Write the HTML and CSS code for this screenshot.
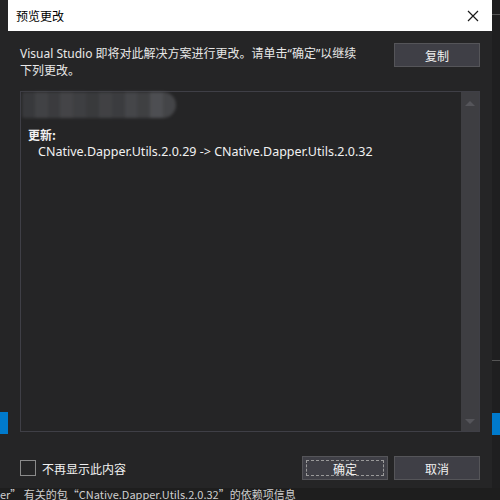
FILE: index.html
```html
<!DOCTYPE html>
<html lang="zh">
<head>
<meta charset="utf-8">
<link rel="stylesheet" href="styles.css">
</head>
<body>
<div class="desk">
  <div class="bg-left"><div class="bg-blue"></div></div>
  <div class="dialog">
    <div class="titlebar">
      <span class="title">预览更改</span>
      <svg class="close" width="12" height="12" viewBox="0 0 12 12"><path d="M1 1 L11 11 M11 1 L1 11" stroke="#1a1a1a" stroke-width="1.2" fill="none"/></svg>
    </div>
    <div class="body">
      <div class="top">
        <p class="desc">Visual Studio 即将对此解决方案进行更改。请单击“确定”以继续<br>下列更改。</p>
        <button class="btn">复制</button>
      </div>
      <div class="box">
        <div class="content">
          <div class="mosaic">
            <span style="background:#3c3d40"></span><span style="background:#47484b"></span><span style="background:#3f4043"></span><span style="background:#4a4a4d"></span><span style="background:#434447"></span><span style="background:#3d3e41"></span><span style="background:#46474a"></span><span style="background:#404144"></span><span style="background:#4b4c50"></span><span style="background:#444548"></span><span style="background:#55565a"></span><span style="background:#4a4b4e"></span>
          </div>
          <div class="head">更新:</div>
          <div class="line">CNative.Dapper.Utils.2.0.29 -&gt; CNative.Dapper.Utils.2.0.32</div>
        </div>
        <div class="scroll">
          <svg width="18" height="12" viewBox="0 0 18 12"><path d="M4 9 L9 4 L14 9 Z" fill="#55555a"/></svg>
          <svg width="18" height="12" viewBox="0 0 18 12"><path d="M4 3 L9 8 L14 3 Z" fill="#55555a"/></svg>
        </div>
      </div>
      <div class="footer">
        <label class="check"><span class="box-ck"></span><span>不再显示此内容</span></label>
        <div class="btns">
          <button class="btn ok"><span class="focus">确定</span></button>
          <button class="btn">取消</button>
        </div>
      </div>
    </div>
  </div>
  <div class="bg-right"><div class="bg-rline l1"></div><div class="bg-rline l2"></div><div class="bg-blue"></div></div>
</div>
<div class="under">er” 有关的包“CNative.Dapper.Utils.2.0.32”的依赖项信息</div>
</body>
</html>
```
FILE: styles.css
```css
html, body {
  margin: 0;
  padding: 0;
  width: 500px;
  height: 500px;
  overflow: hidden;
  background: #1e1e1e;
  font-family: "Noto Sans", "Noto Sans CJK SC", sans-serif;
}
.desk {
  display: flex;
  height: 488px;
}
.bg-left, .bg-right {
  width: 8px;
  background: #252526;
  display: flex;
  flex-direction: column;
}
.bg-right { background: #1f1f20; }
.bg-left .bg-blue, .bg-right .bg-blue {
  margin-top: 412px;
  height: 22px;
  background: #007acc;
}
.bg-rline {
  height: 1px;
  background: #555;
}
.bg-right .l1 { margin-top: 14px; }
.bg-right .l2 { margin-top: 345px; background: #555; }
.bg-right .l2 + .bg-blue { margin-top: 52px; }
.dialog {
  width: 484px;
  height: 488px;
  background: #252526;
  display: flex;
  flex-direction: column;
}
.titlebar {
  height: 31px;
  background: #ffffff;
  display: flex;
  align-items: center;
  justify-content: space-between;
  padding: 0 13px 0 8px;
}
.title {
  font-size: 12px;
  color: #000;
  font-family: "Noto Sans CJK SC", sans-serif;
}
.close { display: block; }
.body {
  flex: 1;
  display: flex;
  flex-direction: column;
  padding: 12px 12px 8px 12px;
}
.top {
  display: flex;
  justify-content: space-between;
  align-items: flex-start;
  height: 48px;
}
.desc {
  margin: 0;
  padding-top: 2px;
  font-size: 12px;
  line-height: 17px;
  color: #e8e8e8;
}
.btn {
  width: 86px;
  height: 24px;
  background: #3f3f46;
  border: 1px solid #555559;
  color: #f1f1f1;
  font-family: "Noto Sans CJK SC", sans-serif;
  font-size: 12px;
  padding: 0;
  box-sizing: border-box;
  display: flex;
  align-items: center;
  justify-content: center;
}
.box {
  height: 341px;
  border: 1px solid #3f3f46;
  box-sizing: border-box;
  display: flex;
}
.content {
  flex: 1;
  padding: 0 0 0 1px;
}
.mosaic {
  width: 154px;
  height: 26px;
  display: flex;
  border-radius: 2px 13px 13px 2px;
  overflow: hidden;
  filter: blur(1.5px);
  opacity: 0.85;
}
.mosaic span { flex: 1; }
.head {
  margin: 9px 0 0 6px;
  font-size: 12px;
  font-weight: bold;
  color: #f1f1f1;
  line-height: 16px;
  font-family: "Noto Sans CJK SC", sans-serif;
}
.line {
  margin: 1px 0 0 16px;
  font-size: 12.5px;
  color: #f1f1f1;
  line-height: 16px;
}
.scroll {
  width: 18px;
  background: #3e3e42;
  display: flex;
  flex-direction: column;
  justify-content: space-between;
  padding: 5px 0 3px;
}
.scroll svg { display: block; }
.footer {
  margin-top: 24px;
  display: flex;
  justify-content: space-between;
  align-items: center;
}
.check {
  display: flex;
  align-items: center;
  gap: 6px;
  font-size: 12px;
  color: #f1f1f1;
  font-family: "Noto Sans CJK SC", sans-serif;
}
.box-ck {
  width: 14px;
  height: 14px;
  border: 1px solid #8a8a8a;
  display: block;
}
.btns {
  display: flex;
  gap: 6px;
}
.ok { padding: 3px; }
.focus {
  flex: 1;
  align-self: stretch;
  border: 1px dashed #9a9a9a;
  display: flex;
  align-items: center;
  justify-content: center;
}
.under {
  font-family: "Noto Sans CJK SC", "DejaVu Sans Mono", monospace;
  font-size: 11px;
  color: #cfcfcf;
  line-height: 12px;
  white-space: nowrap;
}
```
